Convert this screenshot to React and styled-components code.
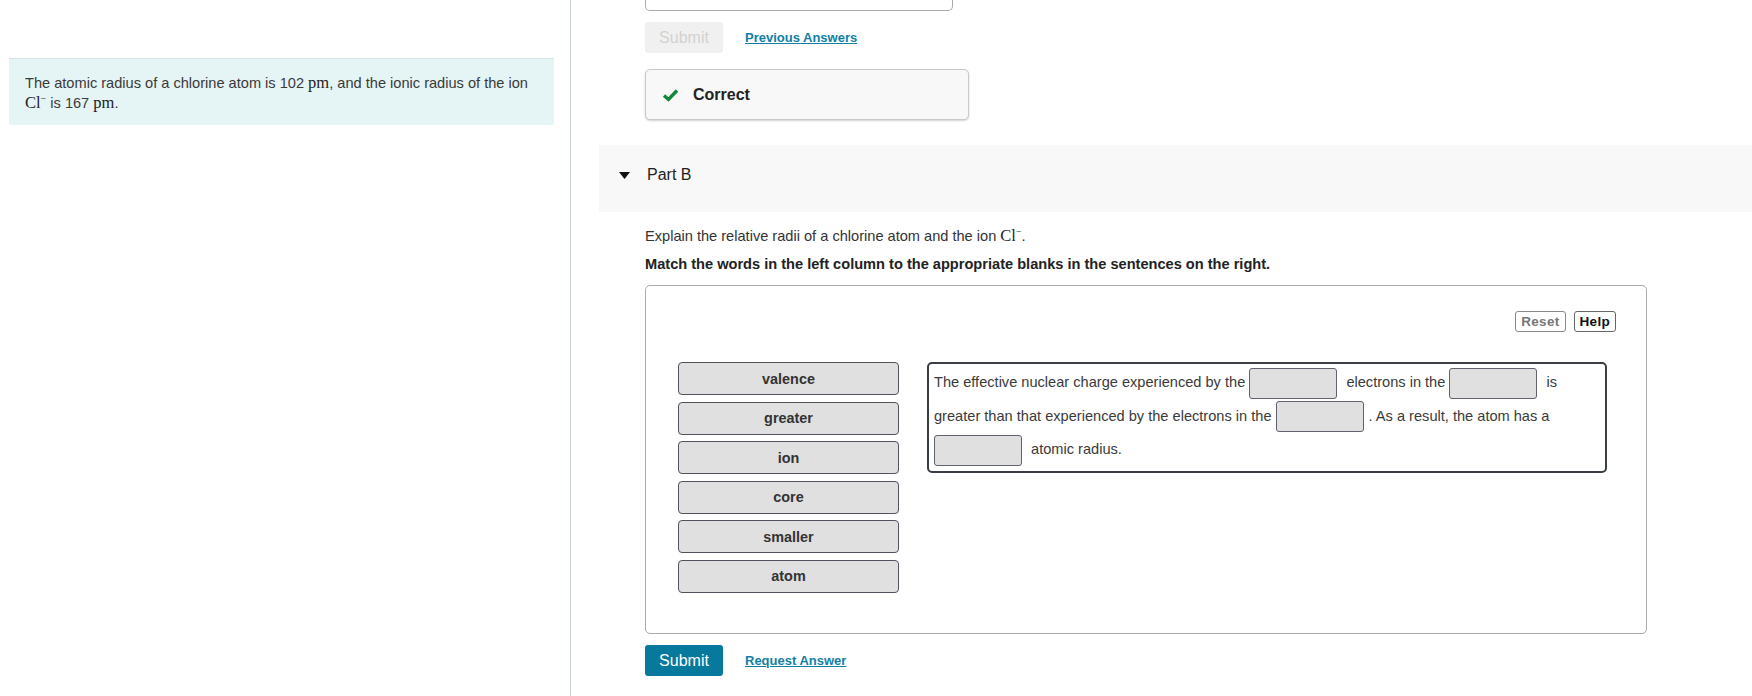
import React from "react";
import styled, { createGlobalStyle } from "styled-components";

const words = ["valence", "greater", "ion", "core", "smaller", "atom"];

function CheckIcon() {
  return (
    <svg width="17" height="14" viewBox="0 0 17 14">
      <path
        d="M2 7.5 L6.5 11.5 L15 2.5"
        fill="none"
        stroke="#13873c"
        strokeWidth="3.4"
      />
    </svg>
  );
}

function Caret() {
  return (
    <svg width="11" height="7" viewBox="0 0 11 7">
      <path d="M0 0 L11 0 L5.5 7 Z" fill="#111" />
    </svg>
  );
}

export default function App() {
  return (
    <>
      <GlobalStyle />
      <Page>
        <LeftColumn>
          <IntroPanel>
            The atomic radius of a chlorine atom is 102 <Math>pm</Math>, and the
            ionic radius of the ion
            <br />
            <Math>
              Cl<sup>−</sup>
            </Math>{" "}
            is 167 <Math>pm</Math>.
          </IntroPanel>
        </LeftColumn>

        <RightColumn>
          <Indented>
            <AnswerStub />
            <ActionRow>
              <SubmitButton disabled>Submit</SubmitButton>
              <TextLink href="#">Previous Answers</TextLink>
            </ActionRow>
            <Feedback>
              <CheckIcon />
              <span>Correct</span>
            </Feedback>
          </Indented>

          <PartHeader>
            <Caret />
            <PartTitle>Part B</PartTitle>
          </PartHeader>

          <Indented>
            <Prompt>
              Explain the relative radii of a chlorine atom and the ion{" "}
              <Math>
                Cl<sup>−</sup>
              </Math>
              .
            </Prompt>
            <Instruction>
              Match the words in the left column to the appropriate blanks in
              the sentences on the right.
            </Instruction>

            <DragBox>
              <ToolRow>
                <SmallButton muted>Reset</SmallButton>
                <SmallButton>Help</SmallButton>
              </ToolRow>
              <MatchArea>
                <WordList>
                  {words.map((w) => (
                    <Word key={w}>{w}</Word>
                  ))}
                </WordList>
                <Sentences>
                  <Line>
                    The effective nuclear charge experienced by the <Blank />{" "}
                    electrons in the <Blank /> is
                  </Line>
                  <Line>
                    greater than that experienced by the electrons in the{" "}
                    <Blank />. As a result, the atom has a
                  </Line>
                  <Line>
                    <Blank /> atomic radius.
                  </Line>
                </Sentences>
              </MatchArea>
            </DragBox>

            <ActionRow>
              <SubmitButton>Submit</SubmitButton>
              <TextLink href="#">Request Answer</TextLink>
            </ActionRow>
          </Indented>
        </RightColumn>
      </Page>
    </>
  );
}

const GlobalStyle = createGlobalStyle`
  html, body {
    margin: 0;
    padding: 0;
    background: #fff;
  }
  body {
    font-family: "Liberation Sans", Arial, sans-serif;
    font-size: 14.6px;
    color: #333;
  }
`;

const Page = styled.div`
  display: flex;
  min-height: 100vh;
  height: 696px;
  overflow: hidden;
`;

const LeftColumn = styled.div`
  width: 571px;
  flex-shrink: 0;
  box-sizing: border-box;
  padding: 58px 16px 0 9px;
  border-right: 1px solid #c9d2de;
`;

const IntroPanel = styled.div`
  background: #e5f4f5;
  border-top: 1px solid #d6e3e6;
  padding: 14px 16px 12px;
  line-height: 20px;
  color: #3a3a3a;
`;

const Math = styled.span`
  font-family: "Liberation Serif", "Times New Roman", serif;
  font-size: 16.5px;
  color: #222;

  & sup {
    font-size: 10px;
    vertical-align: 6px;
    line-height: 0;
  }
`;

const RightColumn = styled.div`
  flex: 1;
  padding-left: 28px;
  min-width: 0;
`;

const Indented = styled.div`
  padding-left: 46px;
`;

const AnswerStub = styled.div`
  width: 308px;
  height: 11px;
  box-sizing: border-box;
  border: 1px solid #aaa;
  border-top: none;
  border-radius: 0 0 5px 5px;
`;

const ActionRow = styled.div`
  display: flex;
  align-items: center;
  gap: 22px;
  margin-top: 11px;
`;

const SubmitButton = styled.button`
  width: 78px;
  height: 31px;
  border: none;
  border-radius: 3px;
  font-family: "Liberation Sans", Arial, sans-serif;
  font-size: 16px;
  padding: 0;
  background: ${({ disabled }) => (disabled ? "#f0f0f0" : "#07799c")};
  color: ${({ disabled }) => (disabled ? "#d2d2d2" : "#fff")};
`;

const TextLink = styled.a`
  font-size: 13px;
  font-weight: bold;
  color: #117fa6;
  text-decoration: underline;
`;

const Feedback = styled.div`
  width: 324px;
  height: 51px;
  box-sizing: border-box;
  margin-top: 16px;
  border: 1px solid #c9c9c9;
  border-radius: 5px;
  background: #f8f8f8;
  box-shadow: 0 1px 2px rgba(0, 0, 0, 0.18);
  display: flex;
  align-items: center;
  gap: 14px;
  padding-left: 16px;
  font-size: 16px;
  font-weight: bold;
  color: #222;
`;

const PartHeader = styled.div`
  margin-top: 25px;
  height: 67px;
  box-sizing: border-box;
  background: #f8f8f8;
  display: flex;
  align-items: flex-start;
  gap: 17px;
  padding: 20px 0 0 20px;

  & svg {
    margin-top: 7px;
  }
`;

const PartTitle = styled.div`
  font-size: 16px;
  line-height: 20px;
  color: #222;
`;

const Prompt = styled.div`
  margin-top: 14px;
  line-height: 20px;
`;

const Instruction = styled.div`
  margin-top: 8px;
  line-height: 20px;
  font-weight: bold;
  color: #222;
`;

const DragBox = styled.div`
  width: 1002px;
  height: 349px;
  box-sizing: border-box;
  margin-top: 11px;
  border: 1px solid #aaa;
  border-radius: 5px;
  padding: 25px 30px 0 32px;
`;

const ToolRow = styled.div`
  display: flex;
  justify-content: flex-end;
  gap: 8px;
`;

const SmallButton = styled.button`
  height: 21px;
  padding: 0 5px;
  background: #fff;
  border: 1px solid ${({ muted }) => (muted ? "#8a8a8a" : "#666")};
  border-radius: 3px;
  font-family: "Liberation Sans", Arial, sans-serif;
  font-size: 13.5px;
  font-weight: bold;
  letter-spacing: 0.3px;
  color: ${({ muted }) => (muted ? "#777" : "#111")};
`;

const MatchArea = styled.div`
  display: flex;
  align-items: flex-start;
  gap: 28px;
  margin-top: 30px;
`;

const WordList = styled.div`
  display: flex;
  flex-direction: column;
  gap: 6.5px;
  width: 221px;
`;

const Word = styled.div`
  height: 33px;
  box-sizing: border-box;
  background: #e0e0e0;
  border: 1.5px solid #52525f;
  border-radius: 4px;
  display: flex;
  align-items: center;
  justify-content: center;
  font-weight: bold;
  font-size: 14.4px;
  color: #333;
`;

const Sentences = styled.div`
  width: 680px;
  box-sizing: border-box;
  border: 2px solid #383e44;
  border-radius: 5px;
  padding: 2px 6px 4px 5px;
`;

const Line = styled.div`
  height: 33.5px;
  line-height: 33.5px;
  white-space: nowrap;
  color: #3a3a3a;
`;

const Blank = styled.span`
  display: inline-block;
  width: 88px;
  height: 31px;
  box-sizing: border-box;
  margin-right: 5px;
  vertical-align: middle;
  background: #e0e0e0;
  border: 1px solid #62626f;
  border-radius: 3px;
`;
